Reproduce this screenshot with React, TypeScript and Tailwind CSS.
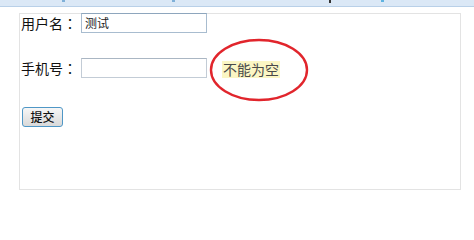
import React from "react";

export default function App() {
  const cjk = { fontFamily: '"Noto Sans CJK SC", "Microsoft YaHei", sans-serif' };
  const colon = { fontFamily: '"Noto Sans CJK TC", sans-serif' };
  return (
    <div className="w-[474px] h-[200px] bg-white overflow-hidden" style={cjk}>
      <div className="relative h-[7px] bg-[#dbe8f6] border-b border-[#b9d0e8]">
        <span className="absolute left-[62px] top-0 w-[3px] h-[2px] bg-[#7fb0d8]" />
        <span className="absolute left-[172px] top-0 w-[3px] h-[2px] bg-[#7fb0d8]" />
        <span className="absolute left-[329px] top-0 w-[2px] h-[3px] bg-[#333]" />
        <span className="absolute left-[381px] top-0 w-[3px] h-[2px] bg-[#5fb3e0]" />
      </div>
      <div className="ml-[19px] mt-[6px] w-[442px] h-[177px] border border-[#e3e3e3] pl-[1px]">
        <div className="flex items-center h-[20px] -mt-[1px]">
          <span className="w-[60px] text-[14px] leading-[20px] text-[#111]">
            用户名<span style={colon}>：</span>
          </span>
          <div className="w-[126px] h-[20px] border border-[#a8bccf] border-t-[#8ea6bd] bg-white pl-[3px] text-[12px] leading-[18px] text-[#222]">
            测试
          </div>
        </div>
        <div className="relative flex items-center h-[20px] mt-[25px]">
          <span className="w-[60px] text-[14px] leading-[20px] text-[#111]">
            手机号<span style={colon}>：</span>
          </span>
          <div className="w-[126px] h-[20px] border border-[#c3ccd6] border-t-[#aab6c3] bg-white" />
          <span className="ml-[15px] mt-[2px] h-[17px] px-[1px] bg-[#fbf6c4] text-[14px] leading-[17px] text-[#4a4a4a]">
            不能为空
          </span>
          <svg
            className="absolute left-[188px] top-[-20px]"
            width="100"
            height="64"
            viewBox="0 0 100 64"
          >
            <ellipse cx="50" cy="32" rx="48" ry="30" fill="none" stroke="#e1252c" strokeWidth="2.4" />
          </svg>
        </div>
        <div className="mt-[25px] pl-[1px]">
          <button className="w-[41px] h-[20px] rounded-[3px] border border-[#4f97c6] bg-gradient-to-b from-[#f7f7f7] to-[#d9d9d9] text-[12px] leading-[18px] text-[#111] font-medium">
            提交
          </button>
        </div>
      </div>
    </div>
  );
}
